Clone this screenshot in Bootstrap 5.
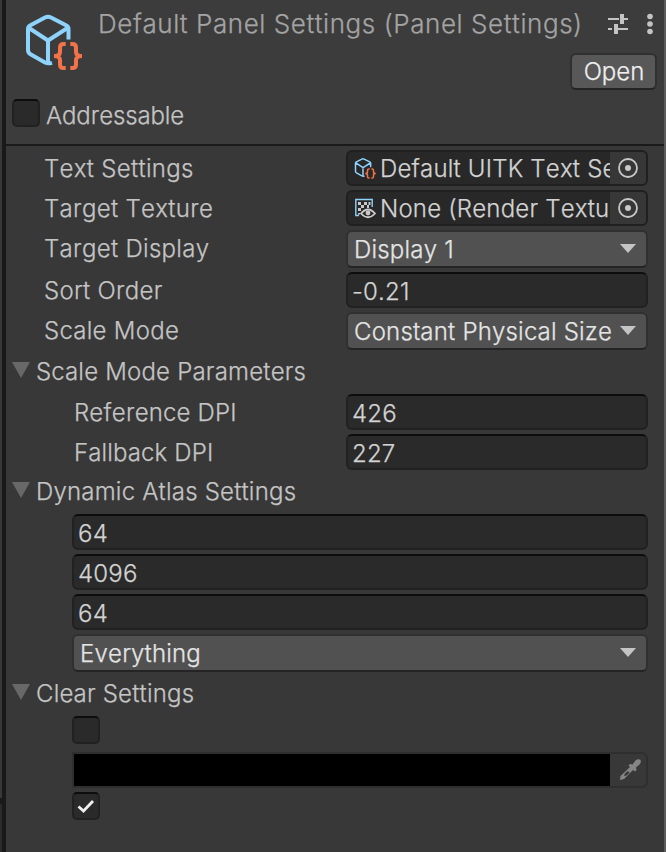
<!DOCTYPE html>
<html lang="en">
<head>
<meta charset="utf-8">
<meta name="viewport" content="width=device-width, initial-scale=1">
<title>Panel Settings</title>
<link href="https://cdn.jsdelivr.net/npm/bootstrap@5.3.0/dist/css/bootstrap.min.css" rel="stylesheet">
<style>
body{font-family:Inter,"Liberation Sans",sans-serif;font-size:24px;font-weight:300;line-height:36px;background:#383838;color:#c4c4c4;letter-spacing:.2px;font-kerning:none;-webkit-text-stroke:.25px currentColor}
.edge-l{width:6px;flex:none;background:linear-gradient(#383838,#383838) 0 0/2px 798px no-repeat,linear-gradient(#2b2b2b,#2b2b2b) 0 804px/2px 48px no-repeat,#191919}
.edge-r{width:2px;flex:none;background:#5c5c5c}
.inspector{height:852px}
.top{height:146px;background:#3c3c3c;border-bottom:2px solid #1a1a1a}
.ttl{font-size:26px;color:#a4a4a4;letter-spacing:.57px;padding-left:92px;padding-top:6px}
.logo{position:absolute;left:12px;top:12px}
.open-btn{width:87px;height:37px;margin-right:7px;margin-top:11px;background:#585858;border:2px solid #303030;border-bottom-color:#242424;border-radius:6px;color:#eee;font-size:24px;font-weight:300;line-height:33px;padding:0 0 0 1px}
.addr{margin-top:7px;padding-left:6px;height:32px;letter-spacing:-.13px}
.addr span+span{margin-left:6px;padding-top:5px}
.rows{padding:4px 16px 0 6px;display:flex;flex-direction:column;gap:4px}
.prop{padding-left:32px}
.prop>.cap{width:302px;flex:none;line-height:34px;padding-top:2px;letter-spacing:.3px}
.prop.sub{padding-left:62px}
.prop.sub>.cap{width:272px;letter-spacing:.15px}
.wide{margin-left:60px}
.inp{height:36px;background:#2a2a2a;border:2px solid #212121;border-top-color:#0d0d0d;border-radius:6px;padding-left:4px;line-height:35px;color:#d2d2d2;min-width:0}
.drop{height:38px;background:#515151;border:2px solid #303030;border-bottom-color:#242424;border-radius:6px;padding:0 10px 0 6px;line-height:35px;color:#e4e4e4;min-width:0}
.drop>span{align-self:flex-start}
.obj{height:36px;background:#282828;border:2px solid #202020;border-radius:6px;line-height:33px;color:#d2d2d2;min-width:0;overflow:hidden;padding-left:6px}
.obj .pick{width:36px;height:32px;background:#373737;flex:none}
.obj .val{margin-left:4px;white-space:nowrap;overflow:hidden;align-self:flex-start}
.chk{width:28px;height:28px;background:#2a2a2a;border:2px solid #212121;border-top-color:#0d0d0d;border-radius:5px;flex:none}
.clr{height:36px;border:2px solid #2f2f2f;border-radius:0 6px 6px 0;background:linear-gradient(#000,#000) 0 0/536px 100% no-repeat #383838;padding-right:5px}
.fold{height:36px;line-height:35px}
.fold>span{align-self:flex-start}
.fold svg{margin-right:6px;margin-top:-4px}
svg{flex:none;display:block}
</style>
</head>
<body>
<svg width="0" height="0" class="position-absolute">
<defs>
<g id="cube" fill="none">
<path d="M50.500 27.500V17Q50.500 14.500 48 13.200L33 5.500Q30 4 27 5.500L12.500 13.200Q10 14.500 10 17V38Q10 41 12.500 42.300L27 50.500Q30 52 34 50.800M11 16L30 28.500L49.500 16M30 28.500V50" stroke="#8dd3fb" stroke-width="4"/>
<path d="M47.700 32H45.500Q42 32 42 35.500V40Q42 44 36 44Q42 44 42 48V52.500Q42 56 45.500 56H47.700M52.300 32H54.500Q58 32 58 35.500V40Q58 44 64 44Q58 44 58 48V52.500Q58 56 54.500 56H52.300" stroke="#f47249" stroke-width="4"/>
</g>
<g id="picker"><circle cx="10" cy="10" r="9" fill="none" stroke="#c8c8c8" stroke-width="1.800"/><circle cx="10" cy="10" r="3" fill="#c8c8c8"/></g>
</defs>
</svg>
<div class="inspector d-flex">
<div class="edge-l"></div>
<main class="flex-grow-1 overflow-hidden">
<header class="top position-relative">
<svg class="logo" width="66" height="62" viewBox="0 0 66 62"><use href="#cube"/></svg>
<div class="d-flex align-items-center">
<div class="ttl text-nowrap">Default Panel Settings (Panel Settings)</div>
<svg class="ms-auto mt-2" width="58" height="24" viewBox="0 0 58 24" fill="none" stroke="#c4c4c4" stroke-width="2"><path d="M2 6H13M17 6H22M2 16H6M12 16H22"/><path d="M16 1V11M10 11V21" stroke-width="4"/><g fill="#c4c4c4" stroke="none"><circle cx="44" cy="3.500" r="2.800"/><circle cx="44" cy="11" r="2.800"/><circle cx="44" cy="18.500" r="2.800"/></g></svg>
</div>
<div class="d-flex justify-content-end"><button class="open-btn" type="button">Open</button></div>
<div class="addr d-flex align-items-center"><span class="chk"></span><span>Addressable</span></div>
</header>
<section class="rows">
<div class="prop d-flex"><span class="cap">Text Settings</span><div class="obj flex-grow-1 d-flex align-items-center"><svg width="22" height="22" viewBox="6 0 58.700 58.700"><use href="#cube"/></svg><span class="val flex-grow-1">Default UITK Text Settings</span><span class="pick d-flex align-items-center justify-content-center"><svg width="20" height="20"><use href="#picker"/></svg></span></div></div>
<div class="prop d-flex"><span class="cap">Target Texture</span><div class="obj flex-grow-1 d-flex align-items-center"><svg width="22" height="22" viewBox="0 0 22 22"><path d="M5 18.500H1.800V2.500H18.200V10" fill="none" stroke="#8dd3fb" stroke-width="1.400"/><path d="M4 5h3v3h-3zM10 5h3v3h-3zM14.500 5h2v3h-2zM7 8h3v3h-3zM13 8h2v3h-2zM4 11h3v3h-3zM4 16h2v1.500h-2z" fill="#c8c8c8"/><path d="M7 16.500Q14 8.500 21 16.500Q14 24 7 16.500Z" fill="#282828" stroke="#c8c8c8" stroke-width="1.800"/><circle cx="14" cy="16" r="2.400" fill="#c8c8c8"/></svg><span class="val flex-grow-1">None (Render Texture)</span><span class="pick d-flex align-items-center justify-content-center"><svg width="20" height="20"><use href="#picker"/></svg></span></div></div>
<div class="prop d-flex"><span class="cap">Target Display</span><div class="drop flex-grow-1 d-flex align-items-center justify-content-between"><span>Display 1</span><svg width="16" height="10"><path d="M0 0H16L8 9Z" fill="#c4c4c4"/></svg></div></div>
<div class="prop d-flex"><span class="cap">Sort Order</span><div class="inp flex-grow-1">-0.21</div></div>
<div class="prop d-flex"><span class="cap">Scale Mode</span><div class="drop flex-grow-1 d-flex align-items-center justify-content-between"><span class="text-nowrap">Constant Physical Size</span><svg width="16" height="10"><path d="M0 0H16L8 9Z" fill="#c4c4c4"/></svg></div></div>
<div class="fold d-flex align-items-center"><svg width="18" height="16"><path d="M0 0H18L9 16Z" fill="#686868"/></svg><span>Scale Mode Parameters</span></div>
<div class="prop sub d-flex"><span class="cap">Reference DPI</span><div class="inp flex-grow-1">426</div></div>
<div class="prop sub d-flex"><span class="cap">Fallback DPI</span><div class="inp flex-grow-1">227</div></div>
<div class="fold d-flex align-items-center"><svg width="18" height="16"><path d="M0 0H18L9 16Z" fill="#686868"/></svg><span>Dynamic Atlas Settings</span></div>
<div class="inp wide">64</div>
<div class="inp wide">4096</div>
<div class="inp wide">64</div>
<div class="drop wide d-flex align-items-center justify-content-between"><span>Everything</span><svg width="16" height="10"><path d="M0 0H16L8 9Z" fill="#c4c4c4"/></svg></div>
<div class="fold d-flex align-items-center"><svg width="18" height="16"><path d="M0 0H18L9 16Z" fill="#686868"/></svg><span>Clear Settings</span></div>
<div class="chk wide mb-1"></div>
<div class="clr wide d-flex align-items-center justify-content-end"><svg width="22" height="22" viewBox="0 0 22 22"><path d="M1 21L1.500 17L11 8L9.500 6.500L11 5L13.500 5.500L16.500 1.500Q19 -.5 21.500 1Q22.500 3 20.500 5.500L17 8.500L17.500 11L16 12.500L14 11L5 20Z" fill="#858585"/><path d="M5 17L6 14.500L9 12L10.500 13.500L7.500 16.500Z" fill="#383838"/></svg></div>
<div class="chk wide"><svg width="24" height="24" viewBox="0 0 24 24"><path d="M4.500 12.500L9.500 17L19 7" fill="none" stroke="#eee" stroke-width="2.800"/></svg></div>
</section>
</main>
<div class="edge-r"></div>
</div>
<script src="https://cdn.jsdelivr.net/npm/bootstrap@5.3.0/dist/js/bootstrap.bundle.min.js"></script>
</body>
</html>
